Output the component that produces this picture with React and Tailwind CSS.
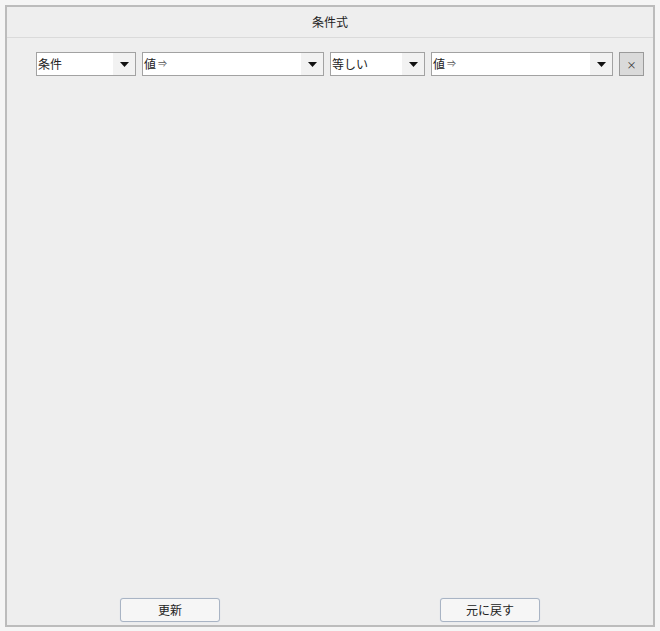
const font = { fontFamily: '"Noto Sans CJK JP", "Noto Sans", sans-serif' };

function Select({ width, label, arrow }) {
  return (
    <div
      className="flex h-[24px] items-stretch border border-[#a2a2a2] bg-white"
      style={{ width }}
    >
      <div className="flex flex-1 items-center overflow-hidden pl-[1px] text-[12px] text-[#222]">
        {label}
        {arrow && <span className="ml-[2px] text-[9px] text-[#555]">⇒</span>}
      </div>
      <div className="flex w-[22px] items-center justify-center bg-[#f2f2f2]">
        <svg width="9" height="5" viewBox="0 0 9 5">
          <path d="M0 0 H9 L4.5 5 Z" fill="#111" />
        </svg>
      </div>
    </div>
  );
}

export default function App() {
  return (
    <div className="h-[631px] w-[660px] bg-[#f5f5f5] p-[5px]" style={font}>
      <div className="flex h-[622px] w-[650px] flex-col border-2 border-[#bcbcbc] bg-[#eeeeee]">
        <div className="flex h-[31px] items-center justify-center border-b border-[#dadada] text-[12px] text-[#222]">
          条件式
        </div>

        <div className="flex items-center gap-[6px] pl-[29px] pt-[14px]">
          <Select width={100} label="条件" />
          <Select width={182} label="値" arrow />
          <Select width={95} label="等しい" />
          <Select width={182} label="値" arrow />
          <button className="flex h-[24px] w-[25px] items-center justify-center border border-[#9a9a9a] bg-[#dadada] text-[10px] text-[#333]">
            ×
          </button>
        </div>

        <div className="flex-1" />

        <div className="flex justify-between px-[113px] pb-[3px]">
          <button className="h-[24px] w-[100px] rounded-[3px] border border-[#a9b4c4] bg-[#f6f6f6] text-[12px] text-[#222] shadow-[0_0_1px_#c8d4e4]">
            更新
          </button>
          <button className="h-[24px] w-[100px] rounded-[3px] border border-[#a9b4c4] bg-[#f6f6f6] text-[12px] text-[#222] shadow-[0_0_1px_#c8d4e4]">
            元に戻す
          </button>
        </div>
      </div>
    </div>
  );
}
